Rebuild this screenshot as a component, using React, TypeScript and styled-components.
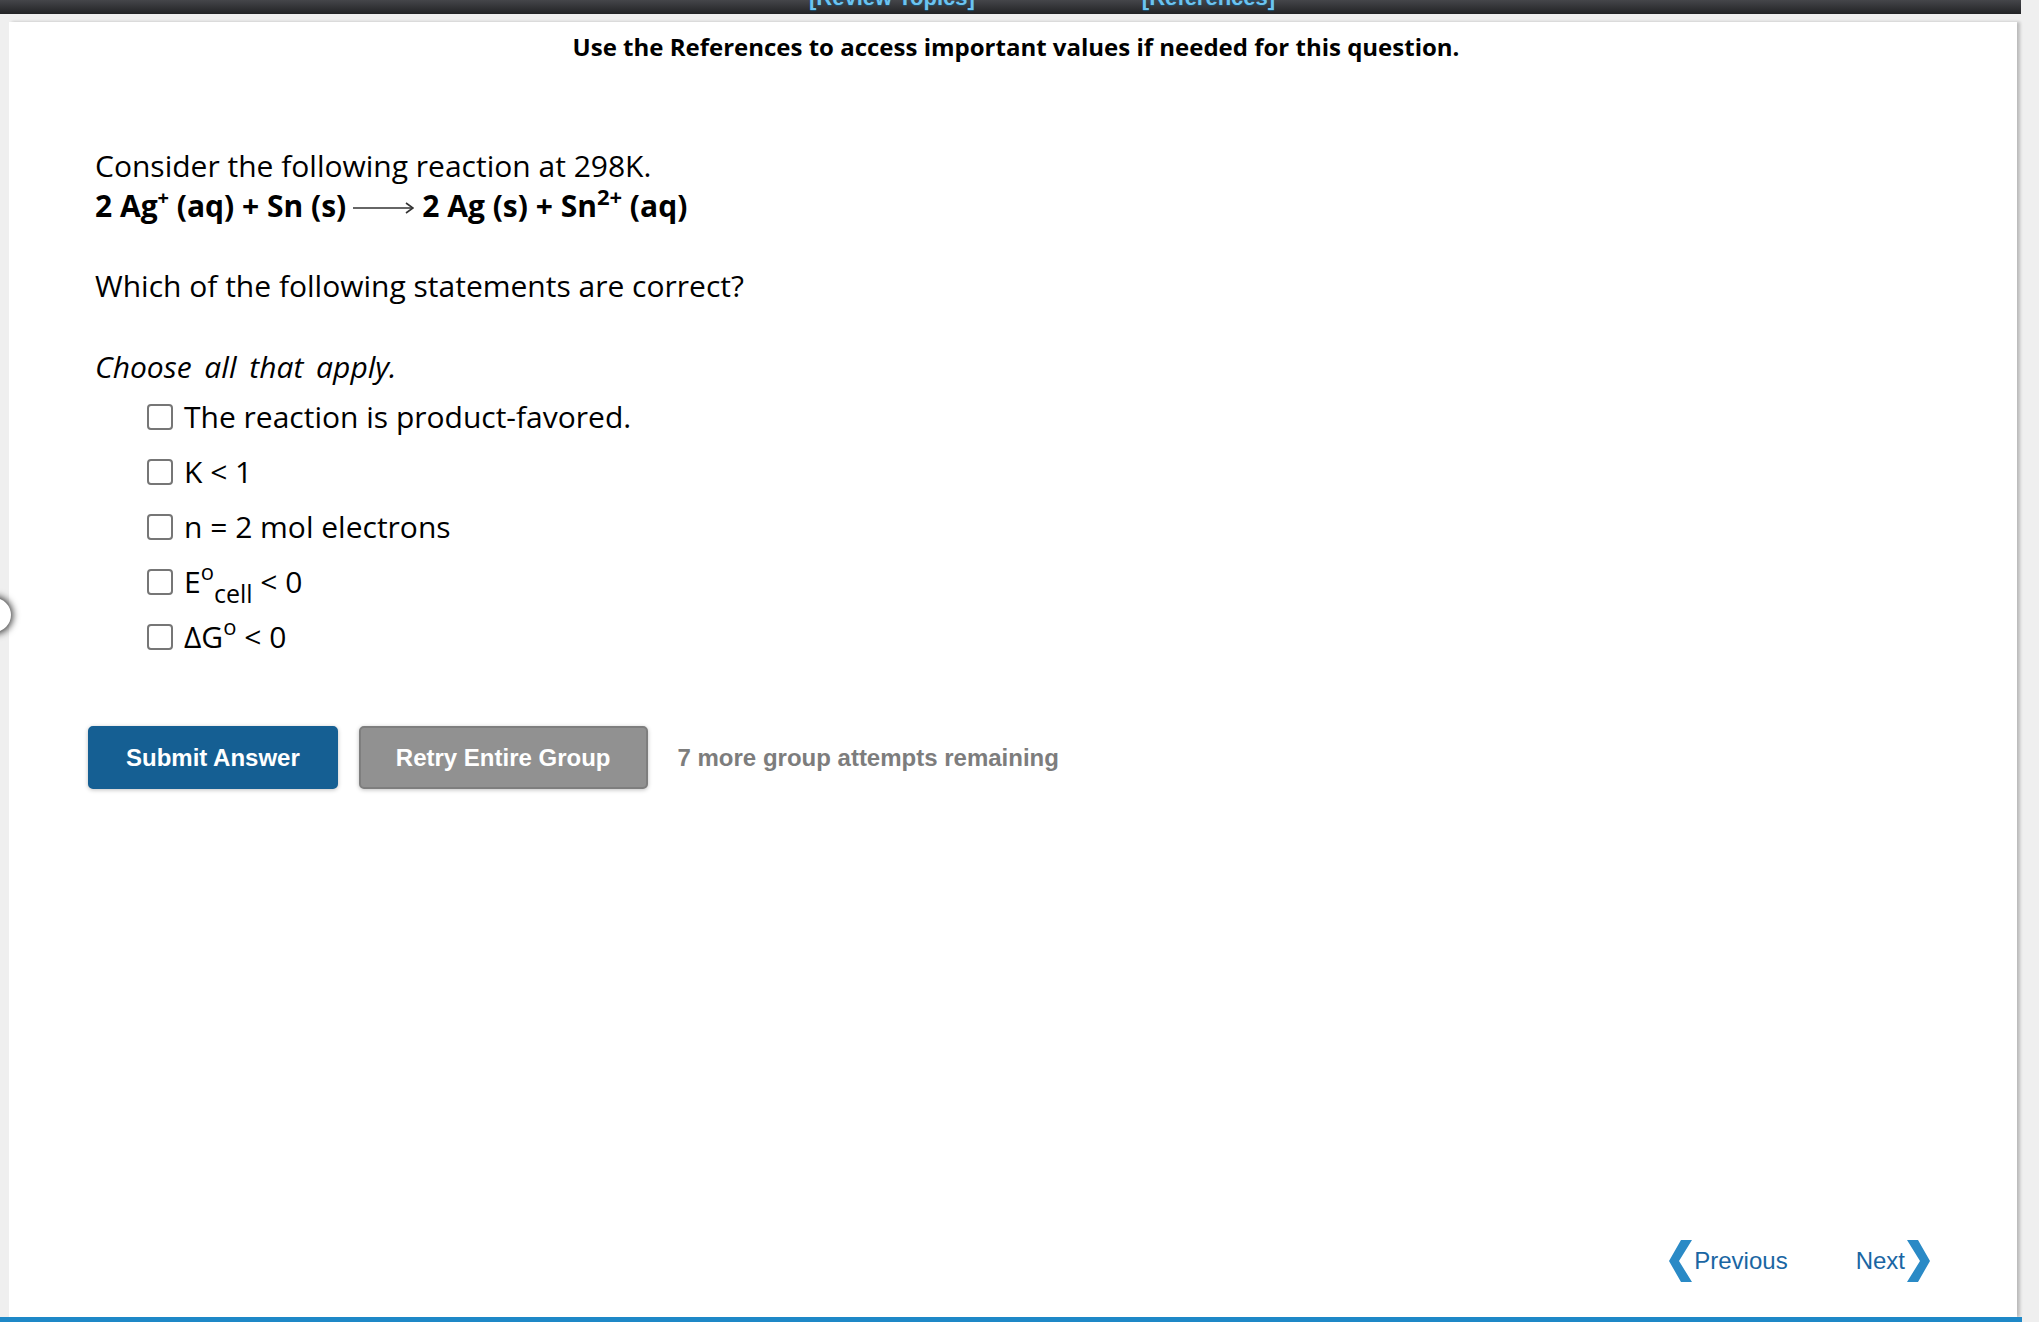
import React from "react";
import styled, { createGlobalStyle } from "styled-components";

const GlobalStyle = createGlobalStyle`
  html, body {
    margin: 0;
    padding: 0;
    background: #efefef;
  }
  body {
    width: 2039px;
    height: 1322px;
    overflow: hidden;
    font-family: "Open Sans", "DejaVu Sans", sans-serif;
    color: #000;
  }
`;

const Page = styled.div`
  position: relative;
  width: 2039px;
  height: 1322px;
  display: flex;
  flex-direction: column;
`;

const TopBar = styled.div`
  width: 2021px;
  height: 14px;
  flex: none;
  overflow: hidden;
  background: linear-gradient(#45464a, #222325);
  display: flex;
  gap: 167px;
  padding-left: 809px;
  box-sizing: border-box;
`;

const TopLink = styled.a`
  display: block;
  margin-top: -13px;
  font-family: "Liberation Sans", Arial, sans-serif;
  font-weight: bold;
  font-size: 22px;
  line-height: 22px;
  color: #6cc3f0;
  text-decoration: none;
  text-shadow: 0 1px 1px #1a4f70;
  white-space: nowrap;
`;

const Strip = styled.div`
  height: 8px;
  flex: none;
  width: 2017px;
`;

const Middle = styled.div`
  flex: 1;
  display: flex;
`;

const Gutter = styled.div`
  width: 9px;
  flex: none;
`;

const Panel = styled.main`
  width: 2008px;
  flex: none;
  background: #fff;
  display: flex;
  flex-direction: column;
  box-shadow: 3px 0 3px rgba(0, 0, 0, 0.22);
`;

const Notice = styled.p`
  margin: 10px 0 0;
  text-align: center;
  font-weight: 700;
  font-size: 24px;
  line-height: 30px;
  padding-left: 6px;
`;

const Question = styled.section`
  padding: 0 0 0 86px;
  margin-top: 84px;
  font-size: 30px;
  line-height: 40px;
`;

const Para = styled.p<{ $gap?: number }>`
  margin: ${(p) => p.$gap ?? 0}px 0 0;
`;

const Equation = styled.div`
  font-weight: 700;
  white-space: pre;
`;

const Sup = styled.sup<{ $size?: number; $lift?: number }>`
  font-size: ${(p) => p.$size ?? 20}px;
  line-height: 0;
  vertical-align: ${(p) => p.$lift ?? 12}px;
`;

const Sub = styled.sub`
  font-size: 25px;
  line-height: 0;
  vertical-align: -10px;
`;

const Arrow = styled.svg`
  display: inline-block;
  width: 61px;
  height: 14px;
  margin: 0 8px 0 7px;
  vertical-align: 2px;
`;

const Instruction = styled.p`
  margin: 41px 0 0;
  font-style: italic;
  word-spacing: 5px;
`;

const Options = styled.ul`
  list-style: none;
  margin: 2px 0 0;
  padding: 0 0 0 52px;
`;

const Option = styled.li`
  height: 55px;
  display: flex;
  align-items: center;
  gap: 11px;
`;

const Box = styled.input`
  appearance: none;
  -webkit-appearance: none;
  width: 26px;
  height: 26px;
  margin: 0;
  border: 2px solid #767676;
  border-radius: 4px;
  background: #fff;
  box-sizing: border-box;
  flex: none;
`;

const Actions = styled.div`
  display: flex;
  align-items: center;
  gap: 21px;
  margin: 62px 0 0 79px;
  font-family: "Liberation Sans", Arial, sans-serif;
`;

const Button = styled.button<{ $tone: "primary" | "muted" }>`
  height: 63px;
  padding: 0 ${(p) => (p.$tone === "primary" ? 36 : 35)}px;
  font-family: inherit;
  font-weight: 700;
  font-size: 24px;
  color: #fff;
  border-radius: 5px;
  box-sizing: border-box;
  background: ${(p) => (p.$tone === "primary" ? "#155f93" : "#919191")};
  border: 2px solid ${(p) => (p.$tone === "primary" ? "#155f93" : "#7e7e7e")};
  box-shadow: 0 1px 4px rgba(0, 0, 0, 0.25);
  cursor: pointer;
`;

const Attempts = styled.span`
  margin-left: 9px;
  font-weight: 700;
  font-size: 24px;
  color: #7d7d7d;
`;

const Footer = styled.nav`
  margin-top: auto;
  display: flex;
  justify-content: flex-end;
  align-items: center;
  gap: 68px;
  padding: 0 87px 35px 0;
  font-family: "Liberation Sans", Arial, sans-serif;
`;

const NavLink = styled.a`
  display: flex;
  align-items: center;
  gap: 2px;
  font-size: 24px;
  color: #1a66a3;
  text-decoration: none;
  height: 42px;
`;

const Chevron = styled.svg`
  width: 23px;
  height: 42px;
  flex: none;
`;

const Shadow = styled.div`
  width: 6px;
  flex: none;
`;

const BottomLine = styled.div`
  height: 5px;
  width: 2022px;
  flex: none;
  background: #1e88c7;
`;

const SideHandle = styled.div`
  position: absolute;
  left: -23px;
  top: 598px;
  width: 34px;
  height: 34px;
  border-radius: 50%;
  background: #fff;
  box-shadow: 0 0 7px 2px rgba(0, 0, 0, 0.75);
`;

const options: React.ReactNode[] = [
  "The reaction is product-favored.",
  "K < 1",
  "n = 2 mol electrons",
  <>
    E<Sup $size={22} $lift={13}>o</Sup>
    <Sub>cell</Sub> &lt; 0
  </>,
  <>
    ΔG<Sup $size={22} $lift={13}>o</Sup> &lt; 0
  </>,
];

const App = () => {
  return (
    <Page>
      <GlobalStyle />
      <TopBar>
        <TopLink href="#">[Review Topics]</TopLink>
        <TopLink href="#">[References]</TopLink>
      </TopBar>
      <Strip />
      <Middle>
        <Gutter />
        <Panel>
          <Notice>Use the References to access important values if needed for this question.</Notice>
          <Question>
            <Para>Consider the following reaction at 298K.</Para>
            <Equation>
              2 Ag<Sup>+</Sup> (aq) + Sn (s)
              <Arrow viewBox="0 0 61 14">
                <line x1="0" y1="7" x2="59" y2="7" stroke="#333" strokeWidth="1.6" />
                <path d="M53 2 L60 7 L53 12" fill="none" stroke="#333" strokeWidth="1.6" />
              </Arrow>
              2 Ag (s) + Sn<Sup $size={22} $lift={12}>2+</Sup> (aq)
            </Equation>
            <Para $gap={40}>Which of the following statements are correct?</Para>
            <Instruction>Choose all that apply.</Instruction>
            <Options>
              {options.map((o, i) => (
                <Option key={i}>
                  <Box type="checkbox" />
                  <span>{o}</span>
                </Option>
              ))}
            </Options>
          </Question>
          <Actions>
            <Button $tone="primary">Submit Answer</Button>
            <Button $tone="muted">Retry Entire Group</Button>
            <Attempts>7 more group attempts remaining</Attempts>
          </Actions>
          <Footer>
            <NavLink href="#">
              <Chevron viewBox="0 0 23 42">
                <polygon points="23,0 12,0 0,21 12,42 23,42 10,21" fill="#2a8ac6" />
              </Chevron>
              Previous
            </NavLink>
            <NavLink href="#">
              Next
              <Chevron viewBox="0 0 23 42">
                <polygon points="0,0 11,0 23,21 11,42 0,42 13,21" fill="#2a8ac6" />
              </Chevron>
            </NavLink>
          </Footer>
        </Panel>
        <Shadow />
      </Middle>
      <BottomLine />
      <SideHandle />
    </Page>
  );
};

export default App;
